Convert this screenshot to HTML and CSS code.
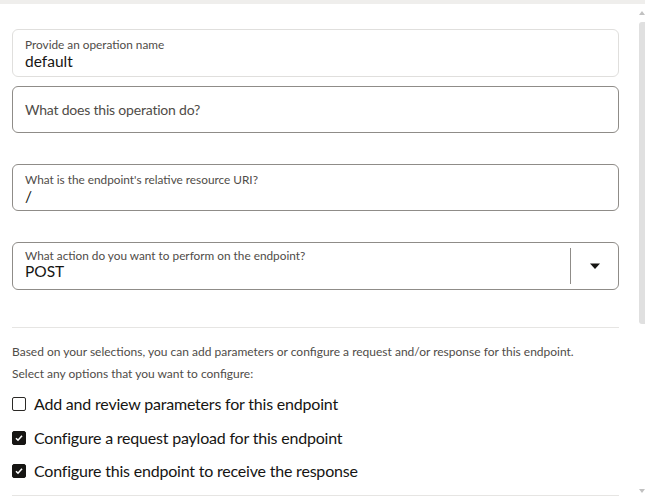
FILE: index.html
```html
<!DOCTYPE html>
<html>
<head>
<meta charset="utf-8">
<link rel="stylesheet" href="styles.css">
</head>
<body>
<div class="topband"></div>
<div class="page">
  <main class="content">
    <div class="field field-readonly">
      <div class="label">Provide an operation name</div>
      <div class="value">default</div>
    </div>
    <div class="field field-empty field-short">
      <div class="placeholder">What does this operation do?</div>
    </div>
    <div class="field field-gap field-short">
      <div class="label">What is the endpoint's relative resource URI?</div>
      <div class="value">/</div>
    </div>
    <div class="field field-select field-gap">
      <div class="select-text">
        <div class="label">What action do you want to perform on the endpoint?</div>
        <div class="value value-tight">POST</div>
      </div>
      <div class="select-btn">
        <svg width="12" height="8" viewBox="0 0 12 8"><path d="M1 1.5h10L6 7z" fill="#161513"/></svg>
      </div>
    </div>
    <hr class="divider divider-top">
    <p class="help">Based on your selections, you can add parameters or configure a request and/or response for this endpoint.</p>
    <p class="help help-2">Select any options that you want to configure:</p>
    <ul class="options">
      <li class="option"><span class="box"></span><span>Add and review parameters for this endpoint</span></li>
      <li class="option"><span class="box checked"><svg width="10" height="10" viewBox="0 0 10 10"><path d="M2 5.2l2 2 4-4.4" fill="none" stroke="#fff" stroke-width="1.6"/></svg></span><span>Configure a request payload for this endpoint</span></li>
      <li class="option"><span class="box checked"><svg width="10" height="10" viewBox="0 0 10 10"><path d="M2 5.2l2 2 4-4.4" fill="none" stroke="#fff" stroke-width="1.6"/></svg></span><span>Configure this endpoint to receive the response</span></li>
    </ul>
    <hr class="divider divider-bottom">
  </main>
  <div class="scrollbar">
    <div class="arrow-up"></div>
    <div class="thumb"></div>
    <div class="track"></div>
    <div class="arrow-down"></div>
  </div>
</div>
</body>
</html>
```
FILE: styles.css
```css
html, body {
  margin: 0;
  padding: 0;
  background: #fff;
  font-family: Lato, "Noto Sans", sans-serif;
  color: #161513;
  overflow: hidden;
}
.topband {
  height: 4px;
  background: #efeeec;
}
.page {
  display: flex;
  height: 494px;
}
.content {
  padding: 25px 0 0 12px;
  flex: 0 0 607px;
}
.field {
  box-sizing: border-box;
  height: 48px;
  border: 1px solid #8f8c88;
  border-radius: 6px;
  padding: 8px 12px 0;
  margin-bottom: 9px;
}
.field-short {
  height: 47px;
}
.field-readonly {
  border-color: #e0dfdd;
}
.field-gap {
  margin-top: 31px;
}
.field-empty {
  display: flex;
  align-items: center;
  padding-top: 0;
}
.label {
  font-size: 11.8px;
  color: #4f4c48;
  line-height: 14px;
}
.value {
  font-size: 15.5px;
  line-height: 18px;
  color: #161513;
}
.value-tight {
  line-height: 17px;
}
.placeholder {
  font-size: 14px;
  color: #4f4c48;
  letter-spacing: -0.2px;
}
.field-select {
  display: flex;
  padding-right: 0;
  padding-top: 6px;
}
.select-text {
  flex: 1;
}
.select-btn {
  width: 47px;
  margin: -1px 0 5px;
  border-left: 1px solid #8f8c88;
  display: flex;
  align-items: center;
  justify-content: center;
}
.divider {
  border: 0;
  border-top: 1px solid #e6e5e3;
  margin: 0;
}
.divider-top {
  margin-top: 37px;
}
.help {
  margin: 17px 0 0;
  font-size: 12px;
  color: #4f4c48;
  line-height: 14px;
}
.help-2 {
  margin-top: 8px;
}
.options {
  list-style: none;
  margin: 13px 0 0;
  padding: 0;
}
.option {
  display: flex;
  align-items: center;
  gap: 8px;
  font-size: 16px;
  line-height: 20px;
  margin-bottom: 13.5px;
  letter-spacing: -0.2px;
}
.box {
  box-sizing: border-box;
  width: 14px;
  height: 14px;
  border: 1.5px solid #2b2926;
  border-radius: 2px;
  display: flex;
  align-items: center;
  justify-content: center;
}
.box.checked {
  background: #161513;
  border-color: #161513;
}
.divider-bottom {
  margin-top: 5px;
}
.scrollbar {
  margin-left: 20px;
  width: 6px;
  display: flex;
  flex-direction: column;
  align-items: center;
}
.arrow-up {
  margin-top: 7px;
  width: 0;
  height: 0;
  border-left: 3px solid transparent;
  border-right: 3px solid transparent;
  border-bottom: 4px solid #c1c1c1;
}
.thumb {
  margin-top: 7px;
  width: 6px;
  height: 302px;
  background: #e0e0e0;
  border-radius: 3px 0 0 3px;
}
.track { flex: 1; }
.arrow-down {
  margin-bottom: 5px;
  width: 0;
  height: 0;
  border-left: 3px solid transparent;
  border-right: 3px solid transparent;
  border-top: 4px solid #c1c1c1;
}
```
